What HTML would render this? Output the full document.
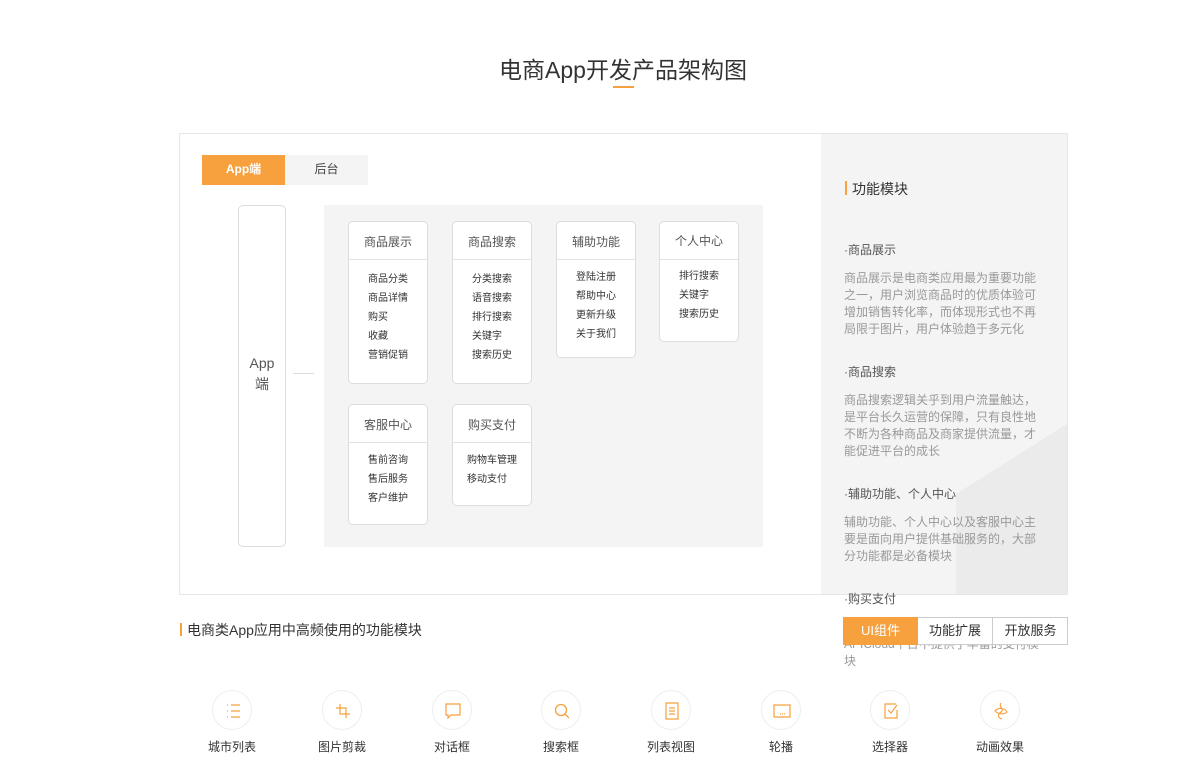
<!DOCTYPE html>
<html><head><meta charset="utf-8"><style>
*{margin:0;padding:0;box-sizing:border-box}
body{width:1192px;height:782px;background:#fff;font-family:"Liberation Sans","Noto Sans CJK SC",sans-serif;position:relative;overflow:hidden;color:#333}
.a{position:absolute}
.card{position:absolute;background:#fff;border:1px solid #ddd;border-radius:5px;width:80px}
.card .h{height:38px;border-bottom:1px solid #e2e2e2;text-align:center;line-height:40px;font-size:12px;color:#555}
.card .b{padding:10px 0 0 19px;font-size:10px;line-height:19px;color:#333}
.rp p{font-size:12px;color:#999;line-height:17px}
.rp h4{font-size:12px;font-weight:normal;color:#555;line-height:17px}
.ic{position:absolute;top:690px;width:40px;height:40px;border:1px solid #eee;border-radius:50%}
.ic svg{position:absolute;left:10px;top:10px}
.lb{position:absolute;top:738px;width:100px;text-align:center;font-size:12px;color:#333}
</style></head><body>
<div class="a" style="left:0;width:1246px;top:51px;text-align:center;font-size:23px;color:#333">电商App开发产品架构图</div>
<div class="a" style="left:613px;top:86px;width:21px;height:2px;background:#f7a03e"></div>

<div class="a" style="left:179px;top:133px;width:889px;height:462px;border:1px solid #e6e6e6"></div>
<div class="a" style="left:821px;top:134px;width:246px;height:460px;background:#f4f4f4;overflow:hidden">
<svg width="246" height="460" style="position:absolute;left:0;top:0"><path d="M135 460 V360 L230 300 L246 290 V460 Z" fill="#ebebeb"/><circle cx="240" cy="330" r="22" fill="none" stroke="#ebebeb" stroke-width="14"/></svg>
</div>
<div class="a" style="left:202px;top:155px;width:83px;height:30px;background:#f7a03e;color:#fff;font-size:12px;text-align:center;line-height:28px;font-weight:bold">App端</div>
<div class="a" style="left:285px;top:155px;width:83px;height:30px;background:#f4f4f4;color:#444;font-size:12px;text-align:center;line-height:28px">后台</div>
<div class="a" style="left:238px;top:205px;width:48px;height:342px;border:1px solid #ddd;border-radius:5px;text-align:center;font-size:14px;color:#555;padding-top:147px;line-height:21px">App<br>端</div>
<div class="a" style="left:293px;top:373px;width:21px;height:1px;background:#ddd"></div>
<div class="a" style="left:324px;top:205px;width:439px;height:342px;background:#f4f4f4"></div>

<div class="card" style="left:348px;top:221px;height:163px"><div class="h">商品展示</div><div class="b">商品分类<br>商品详情<br>购买<br>收藏<br>营销促销</div></div>
<div class="card" style="left:452px;top:221px;height:163px"><div class="h">商品搜索</div><div class="b">分类搜索<br>语音搜索<br>排行搜索<br>关键字<br>搜索历史</div></div>
<div class="card" style="left:556px;top:221px;height:137px"><div class="h">辅助功能</div><div class="b" style="padding-top:8px">登陆注册<br>帮助中心<br>更新升级<br>关于我们</div></div>
<div class="card" style="left:659px;top:221px;height:121px"><div class="h" style="line-height:38px">个人中心</div><div class="b" style="padding-top:7px">排行搜索<br>关键字<br>搜索历史</div></div>
<div class="card" style="left:348px;top:404px;height:121px"><div class="h">客服中心</div><div class="b" style="padding-top:8px">售前咨询<br>售后服务<br>客户维护</div></div>
<div class="card" style="left:452px;top:404px;height:102px"><div class="h">购买支付</div><div class="b" style="padding-left:14px;padding-top:8px">购物车管理<br>移动支付</div></div>

<div class="a" style="left:845px;top:181px;width:2px;height:14px;background:#f7a03e"></div>
<div class="a" style="left:852px;top:179px;font-size:14px;color:#333">功能模块</div>
<div class="a rp" style="left:844px;top:242px;width:200px">
<h4>·商品展示</h4><p style="margin-top:11px">商品展示是电商类应用最为重要功能之一，用户浏览商品时的优质体验可增加销售转化率，而体现形式也不再局限于图片，用户体验趋于多元化</p>
<h4 style="margin-top:26px">·商品搜索</h4><p style="margin-top:11px">商品搜索逻辑关乎到用户流量触达，是平台长久运营的保障，只有良性地不断为各种商品及商家提供流量，才能促进平台的成长</p>
<h4 style="margin-top:26px">·辅助功能、个人中心</h4><p style="margin-top:11px">辅助功能、个人中心以及客服中心主要是面向用户提供基础服务的，大部分功能都是必备模块</p>
<h4 style="margin-top:26px">·购买支付</h4><p style="margin-top:28px">APICloud平台中提供了丰富的支付模块</p>
</div>

<div class="a" style="left:180px;top:623px;width:2px;height:13px;background:#f7a03e"></div>
<div class="a" style="left:187px;top:620px;font-size:14px;color:#333">电商类App应用中高频使用的功能模块</div>
<div class="a" style="left:843px;top:617px;width:225px;height:28px;border:1px solid #ccc;background:#fff"></div>
<div class="a" style="left:843px;top:617px;width:75px;height:28px;background:#f7a03e;color:#fff;font-size:13px;text-align:center;line-height:28px">UI组件</div>
<div class="a" style="left:918px;top:617px;width:75px;height:28px;border-right:1px solid #ccc;font-size:13px;text-align:center;line-height:28px">功能扩展</div>
<div class="a" style="left:993px;top:617px;width:75px;height:28px;font-size:13px;text-align:center;line-height:28px">开放服务</div>

<div class="ic" style="left:212px"><svg width="20" height="20" fill="none" stroke="#f7a03e" stroke-width="1.2"><path d="M4 4h1M4 10h1M4 16h1M8 4h9M8 10h9M8 16h9"/></svg></div>
<div class="ic" style="left:322px"><svg width="20" height="20" fill="none" stroke="#f7a03e" stroke-width="1.2"><path d="M7 3v10h10M3 7h10v10"/></svg></div>
<div class="ic" style="left:432px"><svg width="20" height="20" fill="none" stroke="#f7a03e" stroke-width="1.2"><path d="M3 3h14v11H8l-3 3v-3H3z"/></svg></div>
<div class="ic" style="left:541px"><svg width="20" height="20" fill="none" stroke="#f7a03e" stroke-width="1.3"><circle cx="9" cy="9" r="5.5"/><path d="M13 13l4 4"/></svg></div>
<div class="ic" style="left:651px"><svg width="20" height="20" fill="none" stroke="#f7a03e" stroke-width="1.2"><path d="M4 2h12v16H4zM7 7h6M7 10h6M7 13h6"/></svg></div>
<div class="ic" style="left:761px"><svg width="20" height="20" fill="none" stroke="#f7a03e" stroke-width="1.2"><path d="M2 4h16v12H2zM8 13h1M10 13h1M12 13h1"/></svg></div>
<div class="ic" style="left:870px"><svg width="20" height="20" fill="none" stroke="#f7a03e" stroke-width="1.2"><path d="M15 3H4v14h12V9M7 9l3 3 6-8"/></svg></div>
<div class="ic" style="left:980px"><svg width="20" height="20" fill="none" stroke="#f7a03e" stroke-width="1.1"><path d="M10 2c-3 4 4 6 0 9s-3 6 1 7M4 10c3-4 10-3 12 1-3 3-9 2-12-1z"/></svg></div>

<div class="lb" style="left:182px">城市列表</div>
<div class="lb" style="left:292px">图片剪裁</div>
<div class="lb" style="left:402px">对话框</div>
<div class="lb" style="left:511px">搜索框</div>
<div class="lb" style="left:621px">列表视图</div>
<div class="lb" style="left:731px">轮播</div>
<div class="lb" style="left:840px">选择器</div>
<div class="lb" style="left:950px">动画效果</div>
</body></html>
